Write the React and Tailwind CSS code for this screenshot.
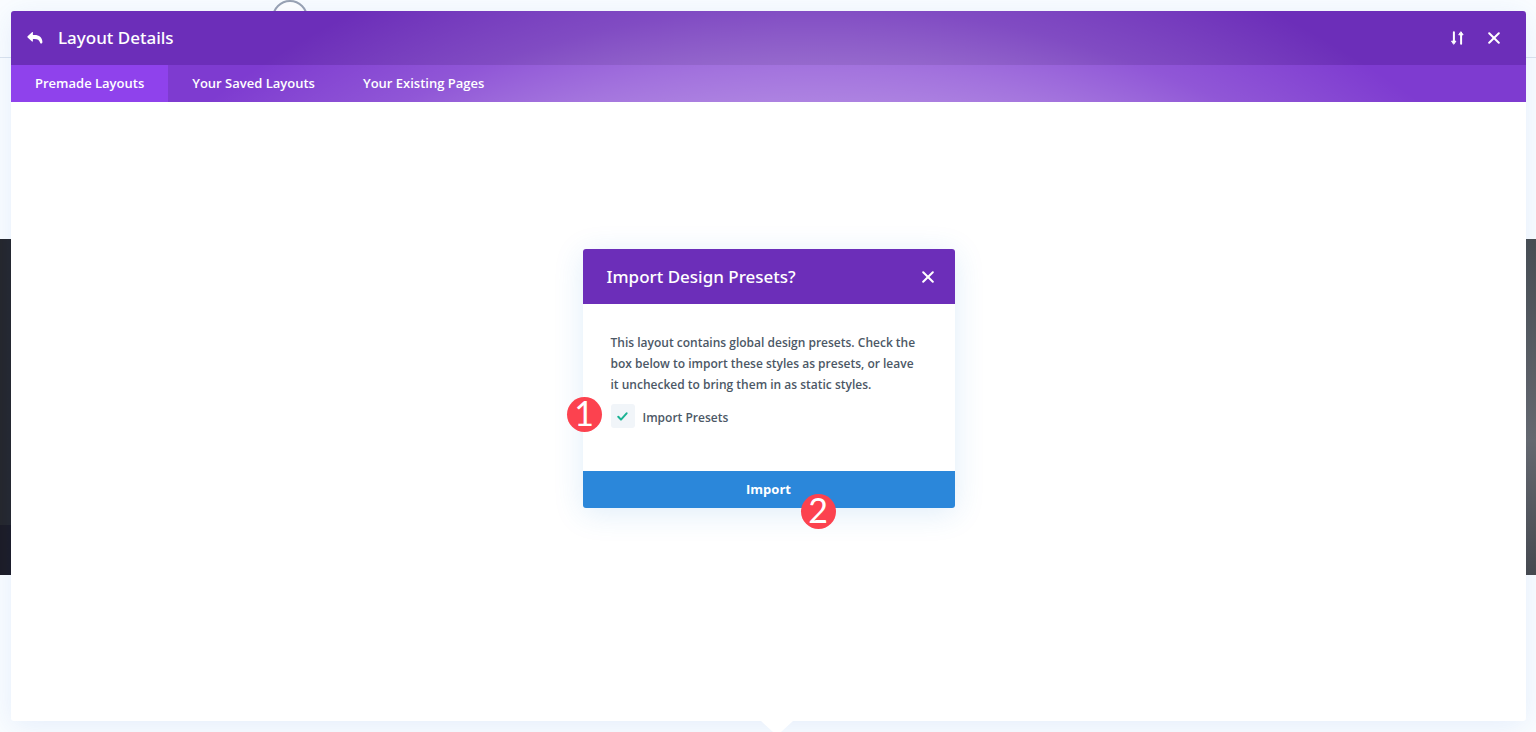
import { useState } from 'react';
import clsx from 'clsx';

const TABS = ['Premade Layouts', 'Your Saved Layouts', 'Your Existing Pages'];

function CloseIcon() {
  return (
    <svg className="size-3" viewBox="0 0 12 12" fill="none" stroke="currentColor" strokeWidth="2" strokeLinecap="round">
      <path d="M1.2 1.200l9.600 9.600M10.800 1.200L1.200 10.800" />
    </svg>
  );
}

function BackIcon() {
  return (
    <svg className="h-3 w-4" viewBox="0 0 16 12" fill="currentColor">
      <path d="M5.9.5v2.6h1.6c4.8 0 7.7 2.6 7.9 6.6.1 1.1-.3 1.8-1.1 1.8s-1.2-.5-1.4-1.3C12.400 8.100 10.600 6.900 7.500 6.900H5.900v2.200c0 .5-.5.7-.9.4L.6 5.400c-.3-.3-.3-.8 0-1.100L5 .2c.4-.3.9-.2.9.3z" />
    </svg>
  );
}

function SortIcon() {
  return (
    <svg className="h-[14px] w-[13px]" viewBox="0 0 13 14" fill="currentColor" stroke="currentColor" strokeLinecap="round" strokeLinejoin="round">
      <path d="M2.900 1.200v9M10.100 12.800v-9" strokeWidth="2" fill="none" />
      <path d="M.9 10.200h4L2.900 13zM8.100 3.800h4L10.100 1z" strokeWidth="1" />
    </svg>
  );
}

function Step({ children, className }) {
  return (
    <span
      className={clsx(
        "absolute flex size-[35px] items-center justify-center rounded-full bg-[#fc424f] pb-1 font-['Lato',sans-serif] text-[34px] leading-none text-white",
        className
      )}
    >
      {children}
    </span>
  );
}

// page that sits underneath the modal
function Backdrop() {
  return (
    <div className="absolute inset-0 overflow-hidden" aria-hidden="true">
      <div className="absolute top-0 left-[272px] size-9 rounded-full border-2 border-[#9aa3b3] bg-white" />
      <div className="absolute inset-x-0 top-[57px] h-px bg-[#dbe4ee]" />
      <div className="absolute inset-x-0 top-[239px] flex h-[336px] justify-between">
        <div className="h-full w-8 bg-linear-to-b from-[#25262b] from-85% to-[#1c1b24] to-85%" />
        <div className="h-full w-8 bg-linear-to-b from-[#494d4f] via-[#68696c] via-60% to-[#48494b]" />
      </div>
    </div>
  );
}

function ImportDialog() {
  const [checked, setChecked] = useState(true);

  return (
    <section
      role="dialog"
      aria-labelledby="import-title"
      className="relative w-[372px] rounded-[3px] bg-white shadow-[0_5px_30px_rgba(43,135,218,0.15)]"
    >
      <header className="flex h-[55px] items-center justify-between rounded-t-[3px] bg-[#6c2eb9] pr-[21px] pl-6 text-white">
        <h2 id="import-title" className="font-['Noto_Sans','Open_Sans',sans-serif] text-[17px] font-medium">
          Import Design Presets?
        </h2>
        <button type="button" aria-label="Close dialog">
          <CloseIcon />
        </button>
      </header>
      <div className="h-[167px] pt-7 pr-8 pl-7 text-[12px] leading-[21px] font-semibold text-[#4c5866]">
        <p>
          This layout contains global design presets. Check the box below to import these styles as presets, or leave it
          unchecked to bring them in as static styles.
        </p>
        <label className="mt-[9px] flex items-center gap-2">
          <span className="relative flex size-6 items-center justify-center">
            <input
              type="checkbox"
              className="size-6 appearance-none rounded-[3px] bg-[#f1f5f9]"
              checked={checked}
              onChange={(e) => setChecked(e.target.checked)}
            />
            {checked && (
              <svg className="pointer-events-none absolute h-[9px] w-[11px]" viewBox="0 0 11 9" fill="none" stroke="#1bb394" strokeWidth="2" strokeLinecap="round" strokeLinejoin="round">
                <path d="M1.300 4.700l2.700 2.900 5.600-6.300" />
              </svg>
            )}
          </span>
          <span className="pt-[3px]">Import Presets</span>
        </label>
      </div>
      <button
        type="button"
        className="h-[37px] w-full rounded-b-[3px] bg-[#2b87da] text-[13px] font-bold text-white"
      >
        Import
      </button>
      <Step className="top-[148px] -left-4">1</Step>
      <Step className="top-[245px] left-[218px]">2</Step>
    </section>
  );
}

export default function App() {
  const [active, setActive] = useState(TABS[0]);

  return (
    <div className="relative flex min-h-screen flex-col bg-[#fafdff] pt-[11px] pr-[10px] pb-[11px] pl-[11px] font-['Open_Sans',sans-serif]">
      <Backdrop />
      <main className="relative flex grow flex-col rounded-[3px] bg-white shadow-[0_5px_30px_rgba(43,100,218,0.1)]">
        <div className="rounded-t-[3px] bg-[radial-gradient(circle_1028px_at_53%_920px,rgba(255,255,255,0.38)_80%,rgba(255,255,255,0.29)_84%,rgba(255,255,255,0.14)_90%,transparent_100%),linear-gradient(#6c2eb9_54px,#7e3bd0_54px)] text-white">
          <header className="flex h-[54px] items-center pr-[26px] pl-4">
            <button type="button" aria-label="Back">
              <BackIcon />
            </button>
            <h1 className="ml-[15px] grow font-['Noto_Sans','Open_Sans',sans-serif] text-[17px] font-medium">
              Layout Details
            </h1>
            <button type="button" aria-label="Sort">
              <SortIcon />
            </button>
            <button type="button" aria-label="Close" className="ml-6">
              <CloseIcon />
            </button>
          </header>
          <nav className="flex h-[37px] text-[13px] font-semibold">
            {TABS.map((tab) => (
              <button
                key={tab}
                type="button"
                onClick={() => setActive(tab)}
                className={clsx('px-6', tab === active && 'bg-[#8f42ec]')}
              >
                {tab}
              </button>
            ))}
          </nav>
        </div>
        <div className="relative flex grow items-start justify-center pt-[147px] pb-12">
          <ImportDialog />
        </div>
        <svg className="absolute top-full left-1/2 h-[11px] w-8 -translate-x-2" viewBox="0 0 32 11" fill="#fff">
          <path d="M0 0h32L20 11h-8z" />
        </svg>
      </main>
    </div>
  );
}
